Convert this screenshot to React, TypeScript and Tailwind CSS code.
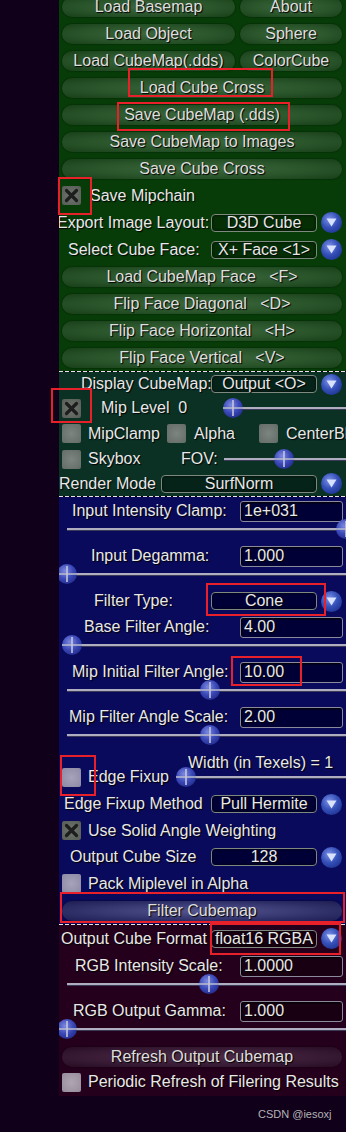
import React from "react";

type Tone = "green" | "teal" | "blue" | "maroon";

const pillTones: Record<string, string> = {
  green: "bg-[radial-gradient(ellipse_at_center,#3d683d_0%,#2a552b_55%,#183f18_100%)]",
  blue: "bg-[radial-gradient(ellipse_at_center,#55558f_0%,#35356f_55%,#1d1d52_100%)]",
  maroon: "bg-[radial-gradient(ellipse_at_center,#4d2d48_0%,#3a1c36_55%,#270c24_100%)]",
};

const dropBg: Record<Tone, string> = {
  green: "bg-[#052e05]",
  teal: "bg-[#06231a]",
  blue: "bg-[#000036]",
  maroon: "bg-[#180012]",
};

function Pill({ children, tone = "green", className = "" }: { children: React.ReactNode; tone?: string; className?: string }) {
  return (
    <div
      className={`flex h-[20px] shrink-0 items-center justify-center whitespace-nowrap rounded-full text-[#dedede] shadow-[0_0_2px_rgba(0,0,0,0.6)] ${pillTones[tone]} ${className}`}
    >
      {children}
    </div>
  );
}

function Check({ on, tone }: { on?: boolean; tone: Tone }) {
  const bg = on
    ? "bg-[radial-gradient(circle,#70766f_0%,#565b56_100%)]"
    : tone === "blue"
      ? "bg-[radial-gradient(circle,#a6a3bb_0%,#8d89a5_100%)]"
      : tone === "maroon"
        ? "bg-[radial-gradient(circle,#b0a6b3_0%,#968b9a_100%)]"
        : "bg-[radial-gradient(circle,#7c857f_0%,#626b65_100%)]";
  return (
    <div className={`ml-[3px] flex h-[19px] w-[19px] shrink-0 items-center justify-center rounded-[2px] ${bg}`}>
      {on && (
        <svg width="15" height="15" viewBox="0 0 15 15">
          <path d="M2.5 2.5 L12.5 12.5 M12.5 2.5 L2.5 12.5" stroke="#151515" strokeWidth="3.2" strokeLinecap="round" opacity="0.9" />
        </svg>
      )}
    </div>
  );
}

function Ball() {
  return (
    <div className="ml-[4px] flex h-[21px] w-[21px] shrink-0 items-center justify-center rounded-full bg-[radial-gradient(circle_at_40%_35%,#7c92e8_0%,#3550b8_45%,#132580_100%)]">
      <svg width="11" height="9" viewBox="0 0 11 9">
        <polygon points="0.5,0.5 10.5,0.5 5.5,8.5" fill="#d8e2ff" />
      </svg>
    </div>
  );
}

function Drop({ value, tone, w = "w-[106px]" }: { value: string; tone: Tone; w?: string }) {
  return (
    <div className="flex items-center">
      <div
        className={`flex h-[18px] shrink-0 items-center justify-center whitespace-nowrap rounded-[4px] border border-[#7d887f] shadow-[inset_0_0_3px_rgba(0,0,0,0.8)] ${dropBg[tone]} ${w}`}
      >
        {value}
      </div>
      <Ball />
    </div>
  );
}

function Field({ value, tone }: { value: string; tone: Tone }) {
  return (
    <div
      className={`flex h-[21px] w-[103px] shrink-0 items-center rounded-[3px] border border-[#8a8a9c] pl-[3px] shadow-[inset_1px_1px_2px_#000] ${dropBg[tone]}`}
    >
      {value}
    </div>
  );
}

function Knob({ pos }: { pos: string }) {
  return (
    <div
      className={`absolute top-1/2 h-[20px] w-[20px] -translate-y-1/2 rounded-full bg-[radial-gradient(circle_at_40%_35%,#7d8ae0_0%,#3a48b8_45%,#141c70_100%)] ${pos}`}
    >
      <div className="absolute left-0 right-0 top-1/2 h-[2px] -translate-y-1/2 bg-[#b4b6cc]/80" />
      <div className="absolute bottom-[2px] left-1/2 top-[2px] w-[2px] -translate-x-1/2 bg-[#c4c6da]/80" />
    </div>
  );
}

function Line({ className = "" }: { className?: string }) {
  return <div className={`h-[3px] flex-1 border-b border-[#3a3a58] bg-[#aeaec0] ${className}`} />;
}

function FieldBlock({ label, pad, value, knob, tone }: { label: string; pad: string; value: string; knob: string; tone: Tone }) {
  return (
    <div className="flex h-[45px] shrink-0 flex-col">
      <div className="flex h-[22px] items-center">
        <span className={`w-[181px] shrink-0 whitespace-nowrap ${pad}`}>{label}</span>
        <Field value={value} tone={tone} />
      </div>
      <div className="relative flex h-[14px] items-center">
        <Line className="ml-[8px]" />
        <Knob pos={knob} />
      </div>
    </div>
  );
}

function Dashes() {
  return <div className="h-px shrink-0 bg-[repeating-linear-gradient(90deg,#e4e4e4_0_4px,transparent_4px_6px)]" />;
}

const red = "absolute border-2 border-[#e8202a]";

export default function App() {
  return (
    <div className="relative flex h-[1132px] w-[346px] overflow-hidden bg-[#10001a] font-['Liberation_Sans',Arial,sans-serif] text-[16px] leading-none text-[#e8e8e8] [text-shadow:1px_1px_1px_#000]">
      <div className="w-[59px] shrink-0" />

      <div className="flex w-[287px] shrink-0 flex-col self-start overflow-hidden">
        {/* green: file ops */}
        <div className="flex flex-col bg-[#073c08]">
          <div className="-mt-[7px] flex h-[27px] items-center">
            <Pill className="ml-[3px] w-[173px]">Load Basemap</Pill>
            <Pill className="ml-[5px] w-[102px]">About</Pill>
          </div>
          <div className="flex h-[27px] items-center">
            <Pill className="ml-[3px] w-[173px]">Load Object</Pill>
            <Pill className="ml-[5px] w-[102px]">Sphere</Pill>
          </div>
          <div className="flex h-[27px] items-center">
            <Pill className="ml-[3px] w-[173px]">Load CubeMap(.dds)</Pill>
            <Pill className="ml-[5px] w-[102px]">ColorCube</Pill>
          </div>
          <div className="flex h-[27px] items-center">
            <Pill className="ml-[3px] w-[280px]">Load Cube Cross</Pill>
          </div>
          <div className="flex h-[27px] items-center">
            <Pill className="ml-[3px] w-[280px]">Save CubeMap (.dds)</Pill>
          </div>
          <div className="flex h-[27px] items-center">
            <Pill className="ml-[3px] w-[280px]">Save CubeMap to Images</Pill>
          </div>
          <div className="flex h-[27px] items-center">
            <Pill className="ml-[3px] w-[280px]">Save Cube Cross</Pill>
          </div>
          <div className="flex h-[27px] items-center">
            <Check on tone="green" />
            <span className="ml-[9px] whitespace-nowrap">Save Mipchain</span>
          </div>
          <div className="flex h-[27px] items-center">
            <span className="-ml-[2px] w-[154px] shrink-0 whitespace-nowrap">Export Image Layout:</span>
            <Drop value="D3D Cube" tone="green" />
          </div>
          <div className="flex h-[27px] items-center">
            <span className="w-[152px] shrink-0 whitespace-nowrap pl-[9px]">Select Cube Face:</span>
            <Drop value="X+ Face <1>" tone="green" />
          </div>
          <div className="flex h-[27px] items-center">
            <Pill className="ml-[3px] w-[280px]">Load CubeMap Face&nbsp;&nbsp;&nbsp;&lt;F&gt;</Pill>
          </div>
          <div className="flex h-[27px] items-center">
            <Pill className="ml-[3px] w-[280px]">Flip Face Diagonal&nbsp;&nbsp;&nbsp;&lt;D&gt;</Pill>
          </div>
          <div className="flex h-[27px] items-center">
            <Pill className="ml-[3px] w-[280px]">Flip Face Horizontal&nbsp;&nbsp;&nbsp;&lt;H&gt;</Pill>
          </div>
          <div className="flex h-[27px] items-center">
            <Pill className="ml-[3px] w-[280px]">Flip Face Vertical&nbsp;&nbsp;&nbsp;&lt;V&gt;</Pill>
          </div>
        </div>
        <Dashes />

        {/* teal: display */}
        <div className="flex flex-col bg-[#0b3125]">
          <div className="flex h-[24px] items-center">
            <span className="w-[152px] shrink-0 whitespace-nowrap pl-[22px]">Display CubeMap:</span>
            <Drop value="Output <O>" tone="teal" />
          </div>
          <div className="flex h-[24px] items-center">
            <Check on tone="teal" />
            <span className="ml-[20px] w-[132px] shrink-0 whitespace-nowrap">Mip Level&nbsp;&nbsp;0</span>
            <div className="relative flex h-[14px] flex-1 items-center">
              <Line />
              <Knob pos="left-[-10px]" />
            </div>
          </div>
          <div className="flex h-[27px] items-center">
            <Check tone="teal" />
            <span className="ml-[7px] w-[76px] shrink-0 whitespace-nowrap">MipClamp</span>
            <Check tone="teal" />
            <span className="ml-[8px] w-[62px] shrink-0 whitespace-nowrap">Alpha</span>
            <Check tone="teal" />
            <span className="ml-[8px] whitespace-nowrap">CenterBlur</span>
          </div>
          <div className="flex h-[24px] items-center">
            <Check tone="teal" />
            <span className="ml-[7px] w-[93px] shrink-0 whitespace-nowrap">Skybox</span>
            <span className="w-[43px] shrink-0 whitespace-nowrap">FOV:</span>
            <div className="relative flex h-[14px] flex-1 items-center">
              <Line />
              <Knob pos="left-[50px]" />
            </div>
          </div>
          <div className="flex h-[25px] items-center">
            <span className="w-[102px] shrink-0 whitespace-nowrap">Render Mode</span>
            <Drop value="SurfNorm" tone="teal" w="w-[156px]" />
          </div>
        </div>
        <Dashes />

        {/* blue: filtering */}
        <div className="flex flex-col bg-[#0a0a5c] pt-[3px]">
          <FieldBlock label="Input Intensity Clamp:" pad="pl-[13px]" value="1e+031" knob="left-[277px]" tone="blue" />
          <FieldBlock label="Input Degamma:" pad="pl-[32px]" value="1.000" knob="left-[-2px]" tone="blue" />
          <div className="mb-[4px] flex h-[22px] items-center">
            <span className="w-[152px] shrink-0 whitespace-nowrap pl-[35px]">Filter Type:</span>
            <Drop value="Cone" tone="blue" />
          </div>
          <FieldBlock label="Base Filter Angle:" pad="pl-[25px]" value="4.00" knob="left-[3px]" tone="blue" />
          <FieldBlock label="Mip Initial Filter Angle:" pad="pl-[13px]" value="10.00" knob="left-[141px]" tone="blue" />
          <FieldBlock label="Mip Filter Angle Scale:" pad="pl-[10px]" value="2.00" knob="left-[141px]" tone="blue" />
          <div className="flex h-[40px] items-end pb-[4px]">
            <div className="flex h-[20px] w-[127px] shrink-0 items-center">
              <Check tone="blue" />
              <span className="ml-[7px] whitespace-nowrap">Edge Fixup</span>
            </div>
            <div className="flex flex-1 flex-col">
              <span className="-mb-[4px] whitespace-nowrap pl-[2px]">Width (in Texels) = 1</span>
              <div className="relative flex h-[20px] items-center">
                <Line />
                <Knob pos="left-[-10px]" />
              </div>
            </div>
          </div>
          <div className="flex h-[26px] items-center">
            <span className="w-[152px] shrink-0 whitespace-nowrap pl-[5px]">Edge Fixup Method</span>
            <Drop value="Pull Hermite" tone="blue" />
          </div>
          <div className="flex h-[27px] items-center">
            <Check on tone="blue" />
            <span className="ml-[7px] whitespace-nowrap">Use Solid Angle Weighting</span>
          </div>
          <div className="flex h-[26px] items-center">
            <span className="w-[152px] shrink-0 whitespace-nowrap pl-[11px]">Output Cube Size</span>
            <Drop value="128" tone="blue" />
          </div>
          <div className="flex h-[27px] items-center">
            <Check tone="blue" />
            <span className="ml-[7px] whitespace-nowrap">Pack Miplevel in Alpha</span>
          </div>
          <div className="flex h-[27px] items-center">
            <Pill tone="blue" className="ml-[3px] w-[280px]">Filter Cubemap</Pill>
          </div>
        </div>
        <Dashes />

        {/* maroon: output */}
        <div className="flex flex-col bg-[#24001c]">
          <div className="flex h-[27px] items-center">
            <span className="w-[152px] shrink-0 whitespace-nowrap pl-[2px]">Output Cube Format</span>
            <Drop value="float16 RGBA" tone="maroon" />
          </div>
          <div className="mt-[3px]" />
          <FieldBlock label="RGB Intensity Scale:" pad="pl-[16px]" value="1.0000" knob="left-[140px]" tone="maroon" />
          <FieldBlock label="RGB Output Gamma:" pad="pl-[14px]" value="1.000" knob="left-[-2px]" tone="maroon" />
          <div className="flex h-[23px] items-center">
            <Pill tone="maroon" className="ml-[3px] w-[280px]">Refresh Output Cubemap</Pill>
          </div>
          <div className="flex h-[28px] items-center">
            <Check tone="maroon" />
            <span className="ml-[7px] whitespace-nowrap">Periodic Refresh of Filering Results</span>
          </div>
        </div>
      </div>

      {/* annotation boxes */}
      <div className={`${red} left-[128px] top-[68px] h-[29px] w-[145px]`} />
      <div className={`${red} left-[117px] top-[102px] h-[29px] w-[173px]`} />
      <div className={`${red} left-[58px] top-[177px] h-[38px] w-[34px]`} />
      <div className={`${red} left-[51px] top-[388px] h-[35px] w-[41px]`} />
      <div className={`${red} left-[206px] top-[583px] h-[33px] w-[120px]`} />
      <div className={`${red} left-[231px] top-[656px] h-[30px] w-[71px]`} />
      <div className={`${red} left-[60px] top-[755px] h-[41px] w-[36px]`} />
      <div className={`${red} left-[60px] top-[892px] h-[31px] w-[285px]`} />
      <div className={`${red} left-[210px] top-[923px] h-[32px] w-[131px]`} />

      <div className="absolute left-[258px] top-[1109px] whitespace-nowrap text-[11px] text-[#b4b4b4] [text-shadow:none]">
        CSDN @iesoxj
      </div>
    </div>
  );
}
